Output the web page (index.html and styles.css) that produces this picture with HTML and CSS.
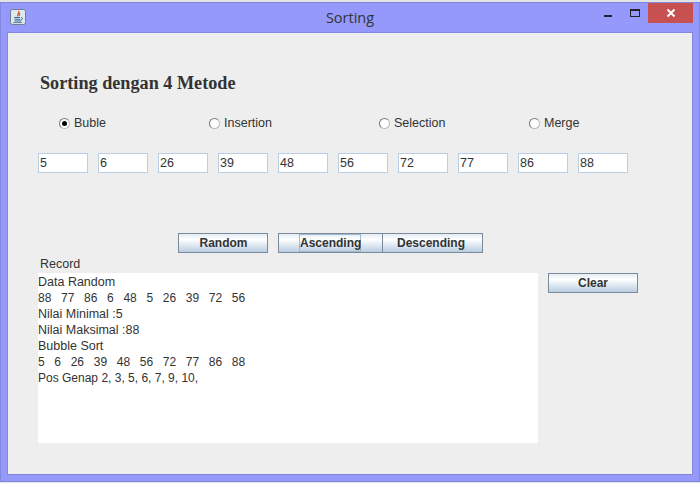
FILE: index.html
```html
<!DOCTYPE html>
<html>
	<head>
		<meta charset="UTF-8">
		<title>Sorting</title>
		<link rel="stylesheet" href="styles.css">
	</head>
	<body>
		<div class="window">
			<div class="titlebar">
				<svg class="app-icon" width="16" height="16" viewBox="0 0 16 16">
					<rect x="0.5" y="0.5" width="15" height="15" rx="2" fill="#dfe7ef" stroke="#6f7f90"/>
					<path d="M8.5 2 C10 4 6.5 5 8 7.5 M10 4 C9 5 9 6 9.6 7" fill="none" stroke="#d8532a" stroke-width="1.2"/>
					<path d="M4 8.5 H10 M4.5 10.3 H10 M4.5 12 H11 M11 8.5 C13 8.5 13 11 10.5 11" fill="none" stroke="#3f6a96" stroke-width="1"/>
					<path d="M3 13.6 H12" stroke="#3f6a96" stroke-width="0.8"/>
				</svg>
				<div class="title">Sorting</div>
				<div class="controls">
					<span class="minimize"></span>
					<span class="maximize"></span>
					<span class="close">
						<svg width="10" height="10" viewBox="0 0 10 10"><path d="M1.5 1.5 L8.5 8.5 M8.5 1.5 L1.5 8.5" stroke="#fff" stroke-width="2"/></svg>
					</span>
				</div>
			</div>
			<div class="content">
				<h1>Sorting dengan 4 Metode</h1>
				<div class="radios">
					<label class="radio r1"><span class="dot on"></span>Buble</label>
					<label class="radio r2"><span class="dot"></span>Insertion</label>
					<label class="radio r3"><span class="dot"></span>Selection</label>
					<label class="radio r4"><span class="dot"></span>Merge</label>
				</div>
				<div class="fields">
					<div class="field">5</div>
					<div class="field">6</div>
					<div class="field">26</div>
					<div class="field">39</div>
					<div class="field">48</div>
					<div class="field">56</div>
					<div class="field">72</div>
					<div class="field">77</div>
					<div class="field">86</div>
					<div class="field">88</div>
				</div>
				<div class="actions">
					<div class="btn random">Random</div>
					<div class="btn ascending"><span class="focus">Ascending</span></div>
					<div class="btn descending">Descending</div>
				</div>
				<div class="record-label">Record</div>
				<div class="record-row">
					<div class="record">
						<div>Data Random</div>
						<div class="nums">88   77   86   6   48   5   26   39   72   56</div>
						<div>Nilai Minimal :5</div>
						<div>Nilai Maksimal :88</div>
						<div>Bubble Sort</div>
						<div class="nums">5   6   26   39   48   56   72   77   86   88</div>
						<div class="small">Pos Genap 2, 3, 5, 6, 7, 9, 10,</div>
					</div>
					<div class="btn clear">Clear</div>
				</div>
			</div>
		</div>
	</body>
</html>
```

FILE: styles.css
```css
html,body{
	margin: 0;
	padding: 0;
	width: 700px;
	height: 483px;
	overflow: hidden;
	background: #e4e4e4;
	font-family: "Liberation Sans", Arial, sans-serif;
}
.window{
	box-sizing: border-box;
	width: 700px;
	height: 480px;
	margin-top: 2px;
	background: #9499fb;
	border: 1px solid #8287de;
	padding: 0 7px 6px;
	display: flex;
	flex-direction: column;
}
.titlebar{
	height: 29px;
	display: flex;
	align-items: flex-start;
	position: relative;
}
.app-icon{
	margin: 6px 0 0 2px;
}
.title{
	position: absolute;
	left: 0;
	right: 0;
	top: 5px;
	text-align: center;
	font: 14.5px/20px "Open Sans", sans-serif;
	color: #333;
}
.controls{
	margin-left: auto;
	margin-right: -1px;
	display: flex;
	align-items: flex-start;
}
.minimize{
	width: 8px;
	height: 2px;
	background: #222;
	margin: 12px 0 0 0;
}
.maximize{
	box-sizing: border-box;
	width: 10px;
	height: 8px;
	border: 1px solid #222;
	border-top-width: 2px;
	margin: 6px 0 0 18px;
}
.close{
	width: 45px;
	height: 20px;
	background: #c75050;
	margin-left: 8px;
	display: flex;
	align-items: center;
	justify-content: center;
}
.content{
	flex: 1;
	background: #eeeeee;
	border: 1px solid #8287de;
	margin: 0 -1px 0 -1px;
	padding: 0 0 0 30px;
	color: #333;
	font-size: 12.5px;
}
h1{
	margin: 40px 0 0 2px;
	font: bold 18.2px/20px "Liberation Serif", "Times New Roman", serif;
	color: #333;
}
.radios{
	display: flex;
	margin-top: 21px;
	padding-left: 21px;
	height: 18px;
	align-items: center;
}
.radio{
	display: flex;
	align-items: center;
	gap: 4px;
}
.r1,.r3{
	width: 150px;
}
.r2{
	width: 170px;
}
.dot{
	box-sizing: border-box;
	width: 11px;
	height: 11px;
	border-radius: 50%;
	border: 1px solid #777;
	border-bottom-color: #bbb;
	border-right-color: #bbb;
	background: #fff;
	display: flex;
	align-items: center;
	justify-content: center;
}
.dot.on:after{
	content: '';
	width: 5px;
	height: 5px;
	border-radius: 50%;
	background: #000;
}
.fields{
	display: flex;
	gap: 10px;
	margin-top: 21px;
}
.field{
	box-sizing: border-box;
	width: 50px;
	height: 20px;
	background: #fff;
	border: 1px solid #b8cfe5;
	padding-left: 1px;
	line-height: 18px;
}
.actions{
	display: flex;
	margin: 60px 0 0 140px;
}
.btn{
	box-sizing: border-box;
	height: 20px;
	border: 1px solid #7a8a99;
	background: linear-gradient(#e2ebf4 0%, #ffffff 30%, #b9cde1 100%);
	font-weight: bold;
	font-size: 12px;
	line-height: 18px;
	text-align: center;
	color: #333;
}
.random{
	width: 90px;
	margin-right: 10px;
	padding-left: 1px;
}
.ascending{
	width: 105px;
	padding-right: 1px;
	display: flex;
	justify-content: center;
}
.focus{
	box-sizing: border-box;
	width: 62px;
	height: 18px;
	border: 1px solid #a3b8cc;
	line-height: 16px;
}
.descending{
	width: 101px;
	margin-left: -1px;
	padding-right: 3px;
}
.record-label{
	margin: 4px 0 0 2px;
	height: 16px;
	line-height: 15px;
}
.record-row{
	display: flex;
	align-items: flex-start;
	gap: 10px;
}
.record{
	box-sizing: border-box;
	width: 500px;
	height: 170px;
	background: #fff;
	padding-top: 1px;
	line-height: 16px;
}
.nums{
	white-space: pre;
	font-size: 12px;
	word-spacing: -0.11px;
}
.small{
	font-size: 12px;
}
.clear{
	width: 90px;
}
```
